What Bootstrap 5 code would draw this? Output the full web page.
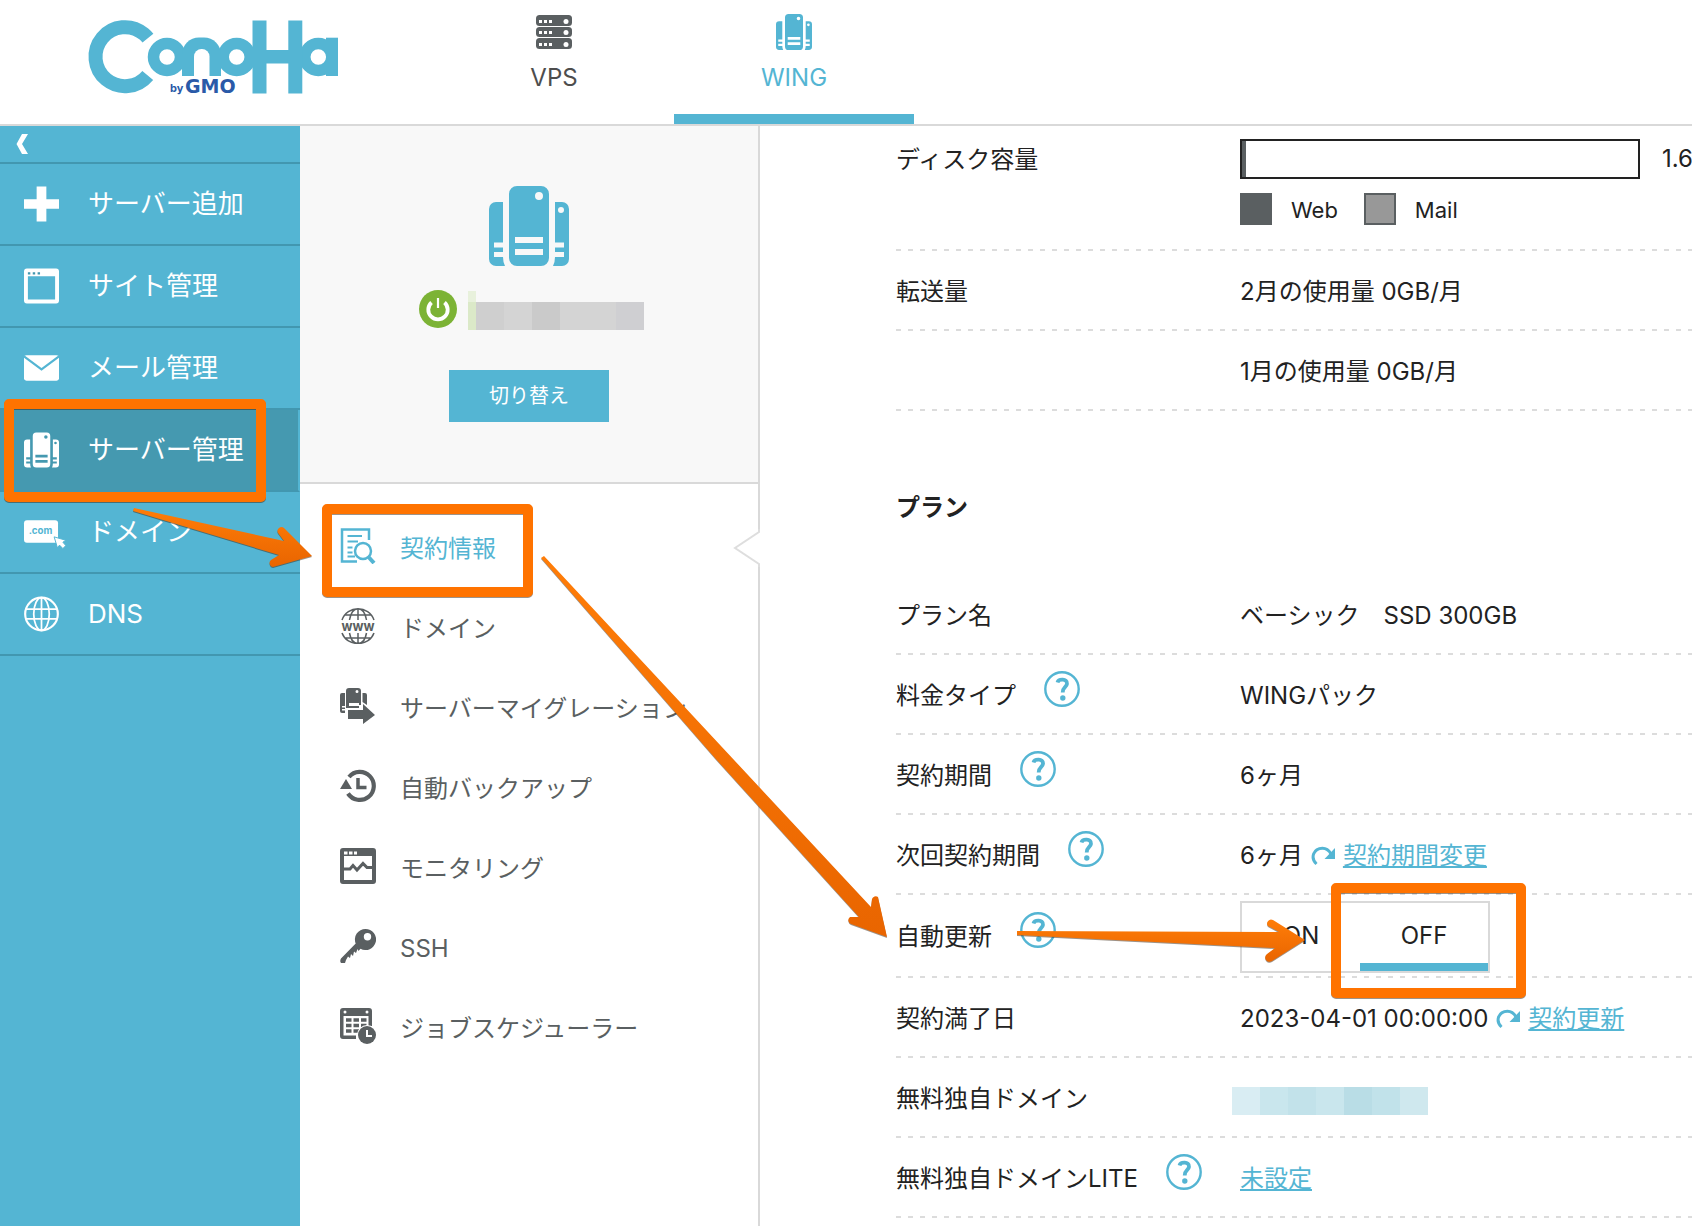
<!DOCTYPE html>
<html lang="ja">
<head>
<meta charset="utf-8">
<meta name="viewport" content="width=device-width, initial-scale=1">
<title>ConoHa WING - 契約情報</title>
<link rel="stylesheet" href="https://cdn.jsdelivr.net/npm/bootstrap@5.3.0/dist/css/bootstrap.min.css">
<style>
  :root { --sky: #54b5d3; --sky-dark: #4297b0; --ink: #222; --slate: #5a5f61; --rule: #d9d9d9; --mark: #ff7300; }
  body { font-family: Inter, "Noto Sans CJK JP", sans-serif; font-size: 24px; line-height: 36px; color: var(--ink); background: #fff; overflow-x: hidden; }
  a { color: var(--sky); }
  svg { display: block; flex: none; }

  .topbar { height: 126px; border-bottom: 2px solid var(--rule); }
  .brand-box { width: 434px; padding: 20px 0 0 88px; }
  .service-tab { width: 240px; height: 124px; padding-top: 14px; color: #4d4d4d; text-decoration: none; border-bottom: 10px solid transparent; }
  .service-tab span { margin-top: 10px; }
  .service-tab svg { color: var(--slate); }
  .service-tab.active, .service-tab.active svg { color: var(--sky); }
  .service-tab.active { border-bottom-color: var(--sky); }

  .shell { min-height: calc(100vh - 126px); }
  .side { width: 300px; flex: none; background: var(--sky); }
  .side-toggle { height: 38px; padding: 0 0 0 15px; background: none; border: 0; border-bottom: 2px solid var(--sky-dark); color: #fff; }
  .side-link { height: 82px; padding-left: 24px; gap: 29px; color: #fff; font-size: 26px; text-decoration: none; border-bottom: 2px solid var(--sky-dark); }
  .side-link .pic { width: 35px; }
  .side-link.active { background: #4599b0; border-right: 2px solid var(--sky); }

  .panel { width: 460px; flex: none; border-right: 2px solid var(--rule); }
  .server-card { height: 358px; padding-top: 60px; background: #f8f8f8; border-bottom: 2px solid var(--rule); color: var(--sky); }
  .server-name { margin: 24px 0 40px; padding-left: 4px; gap: 11px; }
  .switch-btn { width: 160px; height: 52px; background: var(--sky); border: 0; color: #fff; font-size: 20px; }
  .menu { padding-top: 25px; }
  .menu-link { height: 80px; padding-left: 40px; gap: 24px; color: var(--slate); text-decoration: none; }
  .menu-link svg { margin-bottom: 6px; }
  .menu-link.active { color: var(--sky); }
  .menu-link .notch { position: absolute; right: -2px; top: 20px; margin: 0; }

  .detail { min-width: 0; padding-left: 136px; }
  .spec { height: 80px; padding-top: 1px;
    background: repeating-linear-gradient(90deg, #dcdcdc 0 5px, transparent 5px 12px) left bottom / 100% 2px no-repeat; }
  .spec dt { width: 344px; flex: none; font-weight: 400; gap: 28px; }
  .spec dt svg { margin-bottom: 14px; color: var(--sky); }
  .spec dd { gap: 8px; white-space: nowrap; }
  .spec.disk { height: 125px; padding-top: 13px; }
  .spec.disk dt { padding-top: 3px; }
  .spec.renew { height: 83px; }
  .disk-row { gap: 22px; height: 40px; }
  .disk-bar { width: 400px; height: 40px; border: 2px solid var(--ink); flex: none; }
  .disk-used { height: 100%; background: var(--slate); }
  .legend { margin-top: 14px; font-size: 22px; line-height: 34px; gap: 26px; }
  .legend span { gap: 19px; }
  .legend i { width: 32px; height: 32px; border: 2px solid var(--slate); background: var(--slate); }
  .legend i.mail { background: #989898; }
  .plan-title { padding: 79px 0 49px; font-size: 24px; line-height: 36px; }
  .onoff { width: 250px; height: 72px; border: 2px solid var(--rule); }
  .onoff label { width: 118px; padding-top: 6px; border-bottom: 8px solid transparent; }
  .onoff label + input + label { width: 128px; }
  .onoff .btn-check:checked + label { border-bottom-color: var(--sky); }
  .masked { margin: 4px 0 0 -8px; }

  .marks { position: absolute; left: 0; top: 0; pointer-events: none; filter: drop-shadow(0 1px 0 rgba(60, 40, 20, .5)); }
</style>
<script defer src="https://cdn.jsdelivr.net/npm/bootstrap@5.3.0/dist/js/bootstrap.bundle.min.js"></script>
</head>
<body class="position-relative">

<svg width="0" height="0" class="position-absolute" aria-hidden="true">
  <symbol id="wing" viewBox="0 0 80 80">
    <path fill="currentColor" fill-rule="evenodd" d="M28 0H52a8 8 0 0 1 8 8V72a8 8 0 0 1-8 8H28a8 8 0 0 1-8-8V8a8 8 0 0 1 8-8ZM50 6a4 4 0 1 0 0 8a4 4 0 1 0 0-8ZM26 51V57H54V51ZM26 63V69H54V63ZM7 16H14V56.500H5V61.500H14V66H5V71H14Q14 76 16 80H7a7 7 0 0 1-7-7V23a7 7 0 0 1 7-7ZM66 16H73a7 7 0 0 1 7 7V73a7 7 0 0 1-7 7H64Q66 76 66 71H75V66H66V61.500H75V56.500H66ZM72 21a3 3 0 1 0 0 6a3 3 0 1 0 0-6Z"/>
  </symbol>
  <symbol id="help" viewBox="0 0 36 36">
    <circle cx="18" cy="18" r="16.700" fill="none" stroke="currentColor" stroke-width="2.400"/>
    <path d="M13.500 11.500C14.500 7.700 23.500 7.500 23 12.700C22.600 16.500 18.500 16.200 18.700 21.500" fill="none" stroke="currentColor" stroke-width="3.800"/>
    <circle cx="18.800" cy="27" r="2.700" fill="currentColor"/>
  </symbol>
  <symbol id="redo" viewBox="0 0 24 20">
    <path d="M5.500 18C-1 12 2.500 2.200 11.500 2.200C15 2.200 17.800 4 19.800 7.500" fill="none" stroke="currentColor" stroke-width="3"/>
    <path d="M24 2V13H13.500Z" fill="currentColor"/>
  </symbol>
</svg>

<header class="topbar d-flex">
  <a class="brand-box" href="#" aria-label="ConoHa by GMO">
    <svg class="overflow-visible" width="250" height="76" viewBox="88 20 250 76">
      <g fill="none" stroke="#54b5d3">
        <circle cx="125" cy="56.700" r="29.500" stroke-width="14" stroke-dasharray="144.700 41" transform="rotate(39.500 125 56.700)"/>
        <circle cx="167" cy="56" r="21" fill="#fff" stroke="#fff" stroke-width="3"/>
        <circle cx="167" cy="57" r="13.500" stroke-width="11.500"/>
        <circle cx="236.700" cy="57" r="13.500" stroke-width="11.500"/>
        <circle cx="318.300" cy="57" r="13.500" stroke-width="11.500"/>
      </g>
      <g fill="#54b5d3">
        <rect x="182" y="37.500" width="39" height="38.500" rx="17"/>
        <rect x="182" y="54" width="39" height="22"/>
        <rect x="252.500" y="20.500" width="14" height="73"/>
        <rect x="288.300" y="20.500" width="14" height="73"/>
        <rect x="262" y="50" width="30" height="13.500"/>
        <rect x="326" y="37.700" width="12" height="38.300"/>
      </g>
      <rect x="194" y="49" width="15.500" height="35" rx="7.500" fill="#fff"/>
      <rect x="181" y="76" width="44" height="10" fill="#fff"/>
      <text x="170" y="92" font-family="Inter, sans-serif" font-size="11" font-weight="700" fill="#2a5aa8">by</text>
      <text x="185" y="93" font-family="DejaVu Sans, sans-serif" font-size="19" font-weight="700" fill="#2a5aa8">GMO</text>
    </svg>
  </a>
  <nav class="d-flex">
    <a class="service-tab d-flex flex-column align-items-center" href="#">
      <svg width="36" height="36" viewBox="0 0 36 36"><g fill="currentColor"><rect y="1" width="36" height="11" rx="3.500"/><rect y="13" width="36" height="10" rx="3.500"/><rect y="24" width="36" height="11" rx="3.500"/></g><path d="M3 7.500h13M3 18.500h13M3 30.500h13" stroke="#fff" stroke-width="3" stroke-dasharray="3 2"/><g fill="#fff"><circle cx="30" cy="7.500" r="2.500"/><circle cx="30" cy="18.500" r="2.500"/><circle cx="30" cy="30.500" r="2.500"/></g></svg>
      <span>VPS</span>
    </a>
    <a class="service-tab active d-flex flex-column align-items-center" href="#" aria-current="page">
      <svg width="36" height="36"><use href="#wing"/></svg>
      <span>WING</span>
    </a>
  </nav>
</header>

<div class="shell d-flex">
  <nav class="side d-flex flex-column">
    <button class="side-toggle d-flex align-items-center" type="button" aria-label="メニューを閉じる">
      <svg width="14" height="20" viewBox="0 0 14 20"><path d="M7 0H13L7 10L13 20H7L1.500 10Z" fill="currentColor"/></svg>
    </button>
    <a class="side-link d-flex align-items-center" href="#">
      <svg class="pic" height="36" viewBox="0 0 36 36"><path d="M13 0h10v13h13v10H23v13H13V23H0V13h13z" fill="currentColor"/></svg>サーバー追加</a>
    <a class="side-link d-flex align-items-center" href="#">
      <svg class="pic" height="36" viewBox="0 0 36 36"><path fill-rule="evenodd" d="M3 0H33a3 3 0 0 1 3 3V33a3 3 0 0 1-3 3H3a3 3 0 0 1-3-3V3a3 3 0 0 1 3-3ZM4 8V32H32V8Z" fill="currentColor"/><path d="M4 5h13" stroke="#4297b0" stroke-width="2.500" stroke-dasharray="2.500 2.500"/></svg>サイト管理</a>
    <a class="side-link d-flex align-items-center" href="#">
      <svg class="pic" height="26" viewBox="0 0 36 26"><rect width="36" height="26" rx="2.500" fill="currentColor"/><path d="M0 1L18 14.500L36 1" fill="none" stroke="#54b5d3" stroke-width="2.200"/></svg>メール管理</a>
    <a class="side-link active d-flex align-items-center" href="#" aria-current="page">
      <svg class="pic" height="36"><use href="#wing"/></svg>サーバー管理</a>
    <a class="side-link d-flex align-items-center" href="#">
      <svg class="pic overflow-visible" height="24" viewBox="0 0 36 24"><rect width="35" height="23" rx="3" fill="currentColor"/><text x="17" y="14" text-anchor="middle" font-size="10" font-weight="700" fill="#54b5d3">.com</text><path d="M31 17L43 20.500L40 22.500L43 26L40 29L36.500 25.500L34.500 28.500Z" fill="currentColor" stroke="#54b5d3" stroke-width="1"/></svg>ドメイン</a>
    <a class="side-link d-flex align-items-center" href="#">
      <svg class="pic" height="36" viewBox="0 0 36 36"><g fill="none" stroke="currentColor" stroke-width="1.800"><circle cx="18" cy="18" r="16.800" stroke-width="2.200"/><ellipse cx="18" cy="18" rx="8" ry="16.800"/><path d="M18 1V35M1.500 13H34.500M1.500 23H34.500"/></g></svg>DNS</a>
  </nav>

  <aside class="panel">
    <section class="server-card d-flex flex-column align-items-center">
      <svg width="80" height="80"><use href="#wing"/></svg>
      <div class="server-name d-flex">
        <svg width="38" height="38" viewBox="0 0 38 38" role="img" aria-label="稼働中"><circle cx="19" cy="19" r="19" fill="#7cb335"/><path d="M12.500 12.500A9.700 9.700 0 1 0 25.500 12.500" fill="none" stroke="#fff" stroke-width="3.800"/><path d="M19 8V18" stroke="#fff" stroke-width="2.200"/></svg>
        <svg width="176" height="40" viewBox="0 0 176 40" role="img" aria-label="サーバー名"><path d="M0 1h8v11H0z" fill="#e8f1dc"/><path d="M0 12h8v28H0z" fill="#dbe9c8"/><path d="M8 12h168v28H8z" fill="#d4d4d4"/><path d="M8 12h28v28H8z" fill="#cfcfcf"/><path d="M64 12h28v28H64z" fill="#cacaca"/><path d="M148 12h28v28h-28z" fill="#cfcfd2"/></svg>
      </div>
      <button class="switch-btn" type="button">切り替え</button>
    </section>
    <nav class="menu">
      <a class="menu-link active position-relative d-flex align-items-center" href="#" aria-current="page">
        <svg width="36" height="36" viewBox="0 0 36 36"><g fill="none" stroke="currentColor" stroke-width="2.500"><path d="M29 12V1.500H2V33.500H17"/><path d="M7.500 8H22M7.500 13.500H18M7.500 19.500H12.500M7.500 24.500H12.500M7.500 28.500H15" stroke-width="2.200"/><circle cx="23" cy="23" r="8"/><path d="M28.500 29L34 35" stroke-width="4"/></g></svg>契約情報
        <svg class="notch" width="27" height="38" viewBox="0 0 27 38"><path d="M25 3H27V35H25Z" fill="#fff"/><path d="M26 0V3L2 19L26 35V38" fill="#fff" stroke="#dedede" stroke-width="2"/></svg></a>
      <a class="menu-link d-flex align-items-center" href="#">
        <svg width="36" height="36" viewBox="0 0 36 36"><g fill="none" stroke="currentColor" stroke-width="1.500"><path d="M2 12C7-3 29-3 34 12M2 25C7 39 29 39 34 25M9.500 12C12-3 24-3 26.500 12M9.500 25C12 39 24 39 26.500 25M18 1V12M18 25V35M5 7H31M5 30H31"/></g><text x="18" y="22.500" text-anchor="middle" font-size="13" font-weight="700" fill="currentColor">www</text></svg>ドメイン</a>
      <a class="menu-link d-flex align-items-center" href="#">
        <svg width="36" height="36" viewBox="0 0 36 36"><path fill="currentColor" fill-rule="evenodd" d="M9 0H18a3 3 0 0 1 3 3V17H19V15H9V18H19V20H6V3a3 3 0 0 1 3-3ZM17 2a1.500 1.500 0 1 0 0 3a1.500 1.500 0 1 0 0-3ZM2 5H5V18H2V19.500H5V21H2V22.500H5V25H2a2 2 0 0 1-2-2V7a2 2 0 0 1 2-2ZM22.500 5H25a2 2 0 0 1 2 2V17L22.500 14ZM8 22H23V16L35 27L23 36V31H8Z"/></svg>サーバーマイグレーション</a>
      <a class="menu-link d-flex align-items-center" href="#">
        <svg width="36" height="36" viewBox="0 0 36 36"><path d="M9 9A14 14 0 1 1 8 25.500" fill="none" stroke="currentColor" stroke-width="4.200"/><path d="M0 21L6 11L12 21Z" fill="currentColor"/><path d="M18 10V19.500H26.500" fill="none" stroke="currentColor" stroke-width="3.500"/></svg>自動バックアップ</a>
      <a class="menu-link d-flex align-items-center" href="#">
        <svg width="36" height="36" viewBox="0 0 36 36"><path fill="currentColor" fill-rule="evenodd" d="M3 0H33a3 3 0 0 1 3 3V33a3 3 0 0 1-3 3H3a3 3 0 0 1-3-3V3a3 3 0 0 1 3-3ZM4 8V32H32V8Z"/><path d="M4 5H17" stroke="#fff" stroke-width="3" stroke-dasharray="3.500 1.500"/><path d="M4 21H10L13 17.500L17 22L23 15.500L27 19.500H32" fill="none" stroke="currentColor" stroke-width="3"/></svg>モニタリング</a>
      <a class="menu-link d-flex align-items-center" href="#">
        <svg width="36" height="36" viewBox="0 0 36 36"><path fill="currentColor" fill-rule="evenodd" d="M25.500 1a10.500 10.500 0 1 1-5 19.700L18.500 23L17.500 21L16 25L14 23.500L13 28L11 26L10 30L8 28.500L6 32L5 35H1Q-.500 33 1 30.500L15.700 15.500A10.500 10.500 0 0 1 25.500 1ZM27.500 5a3.700 3.700 0 1 0 0 7.400a3.700 3.700 0 1 0 0-7.400Z"/></svg>SSH</a>
      <a class="menu-link d-flex align-items-center" href="#">
        <svg width="36" height="36" viewBox="0 0 36 36"><path fill="currentColor" fill-rule="evenodd" d="M3 0H29a3 3 0 0 1 3 3V18H28.500V8H3.500V27.500H16V31H3a3 3 0 0 1-3-3V3a3 3 0 0 1 3-3ZM5 2.500a1.500 1.500 0 1 0 0 3a1.500 1.500 0 1 0 0-3ZM27 2.500a1.500 1.500 0 1 0 0 3a1.500 1.500 0 1 0 0-3Z"/><path d="M6 12H27M6 17.500H27M6 23H19" stroke="currentColor" stroke-width="3.500" stroke-dasharray="5.500 2"/><circle cx="27" cy="27" r="10" fill="#fff"/><circle cx="27" cy="27" r="9" fill="currentColor"/><path d="M27 22V28H32" fill="none" stroke="#fff" stroke-width="2"/></svg>ジョブスケジューラー</a>
    </nav>
  </aside>

  <main class="detail flex-grow-1 overflow-hidden">
    <dl class="mb-0">
      <div class="spec disk d-flex">
        <dt>ディスク容量</dt>
        <dd class="mb-0">
          <div class="disk-row d-flex align-items-center">
            <div class="disk-bar"><div class="disk-used" style="width: 1%"></div></div>
            <div>1.6GB</div>
          </div>
          <div class="legend d-flex">
            <span class="d-flex"><i></i>Web</span>
            <span class="d-flex"><i class="mail"></i>Mail</span>
          </div>
        </dd>
      </div>
      <div class="spec d-flex align-items-center"><dt>転送量</dt><dd class="mb-0">2月の使用量 0GB/月</dd></div>
      <div class="spec d-flex align-items-center"><dt></dt><dd class="mb-0">1月の使用量 0GB/月</dd></div>
    </dl>
    <h2 class="plan-title fw-bold mb-0">プラン</h2>
    <dl class="mb-0">
      <div class="spec d-flex align-items-center"><dt>プラン名</dt><dd class="mb-0">ベーシック　SSD 300GB</dd></div>
      <div class="spec d-flex align-items-center"><dt class="d-flex align-items-center">料金タイプ<svg width="36" height="36"><use href="#help"/></svg></dt><dd class="mb-0">WINGパック</dd></div>
      <div class="spec d-flex align-items-center"><dt class="d-flex align-items-center">契約期間<svg width="36" height="36"><use href="#help"/></svg></dt><dd class="mb-0">6ヶ月</dd></div>
      <div class="spec d-flex align-items-center"><dt class="d-flex align-items-center">次回契約期間<svg width="36" height="36"><use href="#help"/></svg></dt><dd class="mb-0 d-flex align-items-center">6ヶ月<svg width="24" height="20" color="#54b5d3"><use href="#redo"/></svg><a href="#">契約期間変更</a></dd></div>
      <div class="spec renew d-flex align-items-center"><dt class="d-flex align-items-center">自動更新<svg width="36" height="36"><use href="#help"/></svg></dt>
        <dd class="mb-0">
          <div class="onoff d-flex" role="radiogroup" aria-label="自動更新">
            <input class="btn-check" type="radio" name="renew" id="renew-on"><label for="renew-on" class="d-flex align-items-center justify-content-center">ON</label>
            <input class="btn-check" type="radio" name="renew" id="renew-off" checked><label for="renew-off" class="d-flex align-items-center justify-content-center">OFF</label>
          </div>
        </dd></div>
      <div class="spec d-flex align-items-center"><dt>契約満了日</dt><dd class="mb-0 d-flex align-items-center">2023-04-01 00:00:00<svg width="24" height="20" color="#54b5d3"><use href="#redo"/></svg><a href="#">契約更新</a></dd></div>
      <div class="spec d-flex align-items-center"><dt>無料独自ドメイン</dt><dd class="mb-0">
        <svg class="masked" width="196" height="28" viewBox="0 0 196 28" role="img" aria-label="ドメイン名"><path d="M0 0h196v28H0z" fill="#c9e6ed"/><path d="M0 0h28v28H0z" fill="#d9edf3"/><path d="M56 0h28v28H56z" fill="#c2e2ea"/><path d="M112 0h28v28h-28z" fill="#b9dde6"/><path d="M140 0h28v28h-28z" fill="#c1e2ea"/><path d="M168 0h28v28h-28z" fill="#cfe8ee"/></svg></dd></div>
      <div class="spec d-flex align-items-center"><dt class="d-flex align-items-center">無料独自ドメインLITE<svg width="36" height="36"><use href="#help"/></svg></dt><dd class="mb-0"><a href="#">未設定</a></dd></div>
    </dl>
  </main>
</div>

<!-- Walk-through annotations drawn over the console -->
<svg class="marks" width="1692" height="1226" viewBox="0 0 1692 1226" aria-hidden="true">
  <defs>
    <linearGradient id="shade" x1="0" y1="0" x2="0" y2="1"><stop offset="0" stop-color="#ff7d08"/><stop offset="1" stop-color="#e96500"/></linearGradient>
  </defs>
  <g fill="none" stroke="#ff7300" stroke-width="10" stroke-linejoin="round">
    <rect x="9" y="404" width="252" height="93"/>
    <rect x="327" y="509" width="201" height="83"/>
    <rect x="1336" y="888" width="185" height="105"/>
  </g>
  <g fill="url(#shade)">
    <path d="M134 508L284 541L278 533A4 4 0 0 1 284 528L312 556L273 567A4 4 0 0 1 271 560L279 555L133 511Z"/>
    <path d="M544 556L871 907L872 899A4 4 0 0 1 878 897L887 937L851 924A4 4 0 0 1 850 917L859 917L715 758L541 558Z"/>
    <path d="M1017 931L1279 932L1268 926A4 4 0 0 1 1273 920L1305 940L1272 961A4 4 0 0 1 1267 954L1275 948L1017 935Z"/>
  </g>
</svg>
</body>
</html>
